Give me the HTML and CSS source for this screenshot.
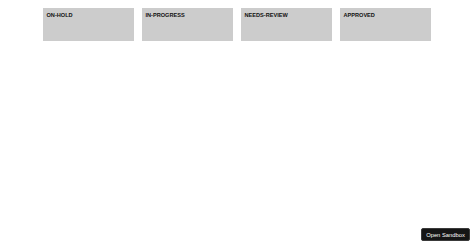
FILE: index.html
```html
<!DOCTYPE html>
<html>
<head>
<meta charset="utf-8">
<link rel="stylesheet" href="styles.css">
</head>
<body>
<div class="board">
  <div class="column"><div class="title">ON-HOLD</div></div>
  <div class="column"><div class="title">IN-PROGRESS</div></div>
  <div class="column"><div class="title">NEEDS-REVIEW</div></div>
  <div class="column"><div class="title">APPROVED</div></div>
</div>
<a class="sandbox-btn">Open Sandbox</a>
</body>
</html>
```
FILE: styles.css
```css
html, body {
  margin: 0;
  padding: 0;
  background: #fff;
  font-family: "Liberation Sans", Arial, sans-serif;
}
.board {
  display: flex;
  justify-content: center;
  gap: 8px;
  padding-top: 8px;
}
.column {
  width: 91px;
  height: 33px;
  background: #cccccc;
  box-sizing: border-box;
  padding: 3.7px 3.5px;
}
.title {
  font-size: 5.6px;
  font-weight: bold;
  color: #111;
  line-height: 7px;
}
.sandbox-btn {
  position: fixed;
  right: 4px;
  bottom: 7px;
  width: 49px;
  height: 13px;
  box-sizing: border-box;
  background: #151515;
  border: 1px solid #3a3a3a;
  border-radius: 2px;
  color: #fff;
  font-size: 5.8px;
  display: flex;
  align-items: center;
  justify-content: center;
}
```
